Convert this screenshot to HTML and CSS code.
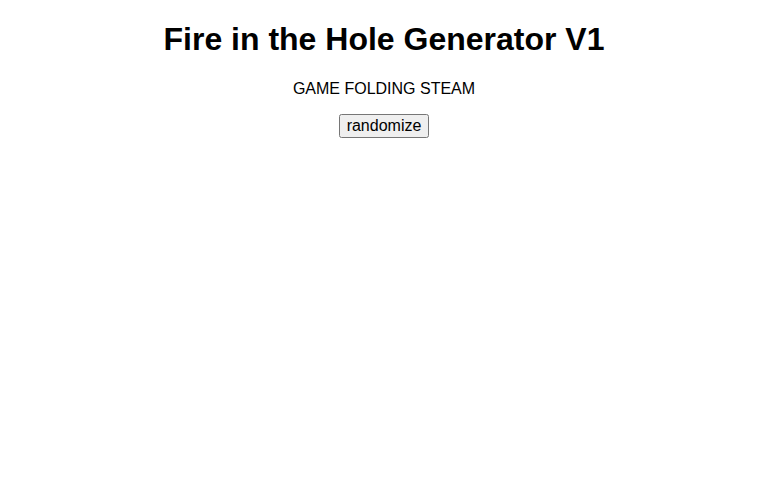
FILE: index.html
```html
<!DOCTYPE html>
<html lang="en">

<head>
    <meta charset="UTF-8">
    <meta name="viewport" content="width=device-width, initial-scale=1.0">
    <title>Fire in the Hole Generator</title>
    <link rel="stylesheet" href="styles.css">
</head>

<body>
    <h1 class="title">Fire in the Hole Generator V1</h1>
    <p id="words" class="words">GAME FOLDING STEAM</p>
    <button id="rand" class="rand" onclick="randomize()">randomize</button>

    <script>
        var list = ['GAME', 'FOLDING', 'STEAM', 'FIRE', 'HOLE', 'CHAIR', 'WATER', 'LAMP', 'GRAVY', 'TOAST']
        var out = document.getElementById('words')

        function pick() {
            return list[Math.floor(Math.random() * list.length)]
        }

        function randomize() {
            out.innerHTML = pick() + ' ' + pick() + ' ' + pick()
        }
    </script>
</body>

</html>
```

FILE: styles.css
```css
body {
    margin: 0;
    font-family: "Liberation Sans", Arial, sans-serif;
    text-align: center;
    color: #000;
    background-color: #fff;
}

.title {
    font-size: 32px;
}

.words {
    font-size: 16px;
}

.rand {
    font-family: "Liberation Sans", Arial, sans-serif;
    font-size: 16px;
}
```
